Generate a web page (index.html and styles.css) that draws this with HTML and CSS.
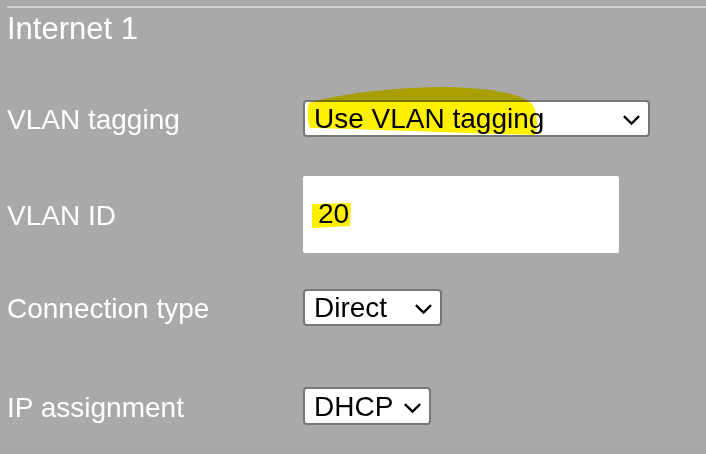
FILE: index.html
```html
<!DOCTYPE html>
<html lang="en">
<head>
<meta charset="utf-8">
<title>Internet 1</title>
<link rel="stylesheet" href="styles.css">
</head>
<body>
<section class="panel">
  <h2 class="panel-title">Internet 1</h2>
  <div class="form">
    <label class="field-label" for="vlan-tagging">VLAN tagging</label>
    <div class="control">
      <select id="vlan-tagging" class="select select--wide">
        <option selected>Use VLAN tagging</option>
        <option>Do not use VLAN tagging</option>
      </select>
      <svg class="chevron" viewBox="0 0 17 10" aria-hidden="true"><path d="M0.9 1.1 L8.5 8.6 L16.1 1.1" /></svg>
      <svg class="marker marker--tagging" viewBox="0 0 250 60" aria-hidden="true"><path d="M9 23 C30 16 80 8 140 7 C180 7 220 12 232 24 C238 32 238 48 235 55 C180 54 100 50 10 48 C7 40 7 30 9 23 Z" /></svg>
    </div>

    <label class="field-label" for="vlan-id">VLAN ID</label>
    <div class="control">
      <input id="vlan-id" class="text-input" type="text" value="20">
      <svg class="marker marker--id" viewBox="0 0 40 26" aria-hidden="true"><path d="M0 1 L39 0 L38 23 L0 25 Z" /></svg>
    </div>

    <label class="field-label" for="conn-type">Connection type</label>
    <div class="control">
      <select id="conn-type" class="select select--conn">
        <option selected>Direct</option>
        <option>PPPoE</option>
      </select>
      <svg class="chevron" viewBox="0 0 17 10" aria-hidden="true"><path d="M0.9 1.1 L8.5 8.6 L16.1 1.1" /></svg>
    </div>

    <label class="field-label" for="ip-assign">IP assignment</label>
    <div class="control">
      <select id="ip-assign" class="select select--ip">
        <option selected>DHCP</option>
        <option>Static</option>
      </select>
      <svg class="chevron" viewBox="0 0 17 10" aria-hidden="true"><path d="M0.9 1.1 L8.5 8.6 L16.1 1.1" /></svg>
    </div>
  </div>
</section>
</body>
</html>
```

FILE: styles.css
```css
html, body {
  margin: 0;
  padding: 0;
  background: #a9a9a9;
}

body {
  font-family: "Liberation Sans", Arial, sans-serif;
  color: #ffffff;
  overflow: hidden;
}

.panel {
  margin: 6px 0 0 7px;
  border-top: 2px solid #d3d3d3;
}

.panel-title {
  margin: 3px 0 0 0;
  font-size: 31px;
  line-height: 36px;
  font-weight: normal;
}

.form {
  display: grid;
  grid-template-columns: 296px auto;
  grid-template-rows: 96px 96px 90px 108px;
  align-items: center;
  justify-items: start;
  padding-top: 23px;
}

.field-label {
  margin-top: 3px;
  font-size: 28px;
  line-height: normal;
}

.control {
  position: relative;
  display: flex;
}

.select {
  appearance: none;
  -webkit-appearance: none;
  box-sizing: border-box;
  height: 37px;
  margin: 0;
  padding: 0 0 0 9px;
  border: 2px solid #777777;
  border-radius: 4px;
  background: #ffffff;
  color: #000000;
  font-family: "Liberation Sans", Arial, sans-serif;
  font-size: 28px;
  outline: none;
}

.select--wide { width: 347px; }
.select--conn { width: 139px; }
.select--ip { width: 128px; height: 38px; }

.chevron {
  position: absolute;
  right: 10px;
  top: 50%;
  width: 17px;
  height: 10px;
  margin-top: -3.5px;
  fill: none;
  stroke: #000000;
  stroke-width: 2.3;
  pointer-events: none;
}

.text-input {
  box-sizing: border-box;
  width: 316px;
  height: 77px;
  margin: 0;
  padding: 0 0 0 15px;
  border: none;
  border-radius: 2px;
  background: #ffffff;
  color: #000000;
  font-family: "Liberation Sans", Arial, sans-serif;
  font-size: 28px;
  outline: none;
}

.marker {
  position: absolute;
  fill: #fff000;
  mix-blend-mode: multiply;
  pointer-events: none;
}

.marker--tagging {
  left: -3px;
  top: -20px;
  width: 250px;
  height: 60px;
}

.marker--id {
  left: 9px;
  top: 27px;
  width: 40px;
  height: 26px;
}
```
